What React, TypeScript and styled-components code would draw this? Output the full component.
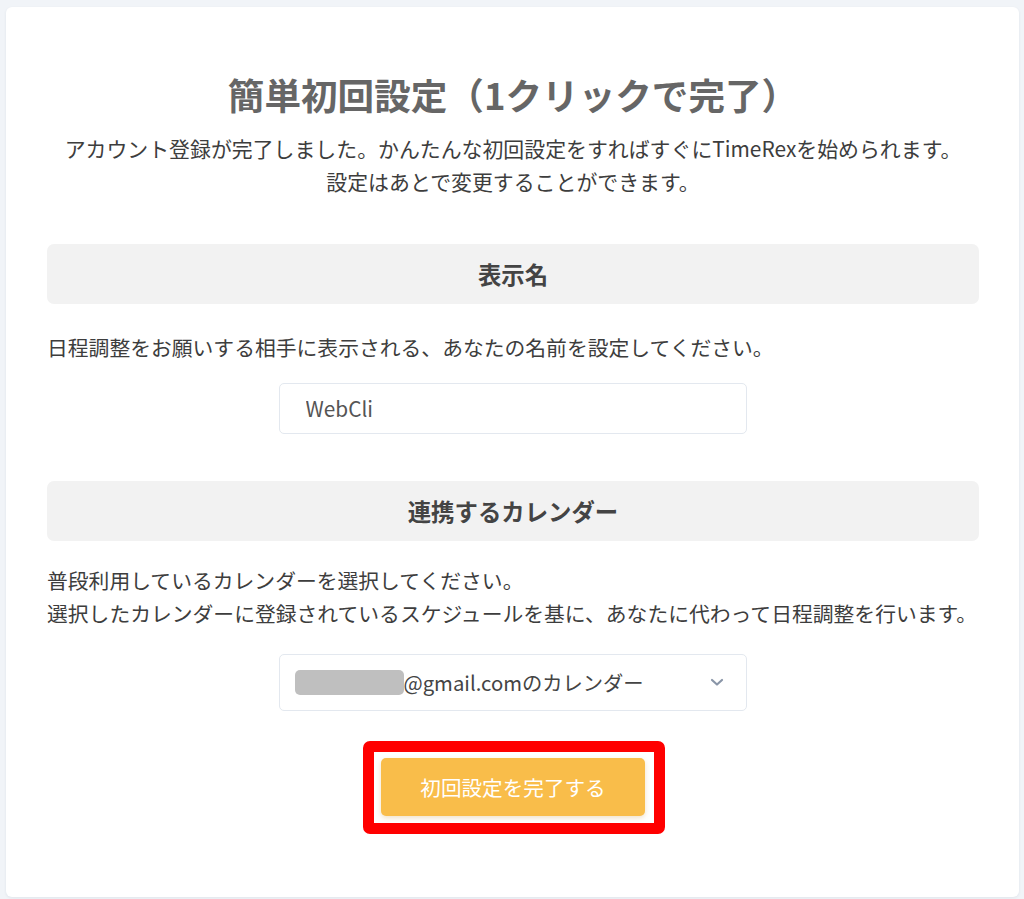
import React from "react";
import styled, { createGlobalStyle } from "styled-components";

const GlobalStyle = createGlobalStyle`
  html, body {
    margin: 0;
    padding: 0;
    background: #f1f4f8;
    font-family: "Noto Sans CJK JP", "Noto Sans", sans-serif;
  }
  * { box-sizing: border-box; }
`;

const Page = styled.div`
  padding: 7px 5px 4px 6px;
  min-height: 899px;
`;

const Card = styled.main`
  background: #ffffff;
  border-radius: 6px;
  box-shadow: 0 1px 3px rgba(30, 50, 80, 0.08);
  padding: 61px 40px 63px 41px;
  display: flex;
  flex-direction: column;
  align-items: stretch;
`;

const Title = styled.h1`
  margin: 0;
  text-align: center;
  font-size: 36.6px;
  line-height: 54.6px;
  font-weight: 700;
  color: #666666;
`;

const Lead = styled.p`
  margin: 9.5px 0 0;
  text-align: center;
  font-size: 20.9px;
  line-height: 33.3px;
  color: #3d3d3d;
`;

const SectionHead = styled.h2<{ $top: number }>`
  margin: ${(p) => p.$top}px 0 0;
  height: 60px;
  display: flex;
  align-items: center;
  justify-content: center;
  background: #f2f2f2;
  border-radius: 7px;
  font-size: 23.4px;
  font-weight: 700;
  color: #444444;
`;

const Desc = styled.p<{ $top: number }>`
  margin: ${(p) => p.$top}px 0 0;
  font-size: 20.8px;
  line-height: 33.3px;
  color: #3d3d3d;
`;

const FieldRow = styled.div<{ $top: number }>`
  margin-top: ${(p) => p.$top}px;
  display: flex;
  justify-content: center;
  padding-right: 1px;
`;

const TextInput = styled.input`
  width: 468px;
  height: 51px;
  border: 1px solid #e3e8ef;
  border-radius: 5px;
  padding: 0 26px;
  font-family: inherit;
  font-size: 20.8px;
  color: #555555;
  background: #fff;
  outline: none;
`;

const Select = styled.div`
  width: 468px;
  height: 57px;
  border: 1px solid #e3e8ef;
  border-radius: 5px;
  padding: 0 22px 0 15px;
  display: flex;
  align-items: center;
  font-size: 20.3px;
  color: #444444;
  background: #fff;
`;

const Masked = styled.span`
  display: inline-block;
  width: 109px;
  height: 25px;
  background: #bfbfbf;
  border-radius: 5px;
  margin-top: 1px;
`;

const SelectText = styled.span`
  flex: 1;
  white-space: nowrap;
`;

const Chevron = styled.svg`
  width: 14px;
  height: 10px;
  flex: none;
`;

const Highlight = styled.div`
  margin-top: 30px;
  align-self: center;
  margin-left: 2px;
  border: 11px solid #ff0000;
  border-radius: 7px;
  padding: 6px 9px 7px 7px;
  display: flex;
`;

const SubmitButton = styled.button`
  width: 264px;
  height: 58px;
  border: none;
  border-radius: 5px;
  background: #f9bd4a;
  color: #ffffff;
  font-family: inherit;
  font-size: 20.6px;
  box-shadow: 0 2px 5px rgba(200, 140, 40, 0.25);
  cursor: pointer;
`;

export default function App() {
  return (
    <>
      <GlobalStyle />
      <Page>
        <Card>
          <Title>簡単初回設定（1クリックで完了）</Title>
          <Lead>
            アカウント登録が完了しました。かんたんな初回設定をすればすぐにTimeRexを始められます。
            <br />
            設定はあとで変更することができます。
          </Lead>

          <SectionHead $top={45}>表示名</SectionHead>
          <Desc $top={27}>
            日程調整をお願いする相手に表示される、あなたの名前を設定してください。
          </Desc>
          <FieldRow $top={19}>
            <TextInput defaultValue="WebCli" />
          </FieldRow>

          <SectionHead $top={47}>連携するカレンダー</SectionHead>
          <Desc $top={23}>
            普段利用しているカレンダーを選択してください。
            <br />
            選択したカレンダーに登録されているスケジュールを基に、あなたに代わって日程調整を行います。
          </Desc>
          <FieldRow $top={23}>
            <Select>
              <Masked />
              <SelectText>@gmail.comのカレンダー</SelectText>
              <Chevron viewBox="0 0 14 10">
                <polyline
                  points="2,3 7,7.5 12,3"
                  fill="none"
                  stroke="#8a96a8"
                  strokeWidth="2.2"
                  strokeLinecap="round"
                  strokeLinejoin="round"
                />
              </Chevron>
            </Select>
          </FieldRow>

          <Highlight>
            <SubmitButton>初回設定を完了する</SubmitButton>
          </Highlight>
        </Card>
      </Page>
    </>
  );
}
